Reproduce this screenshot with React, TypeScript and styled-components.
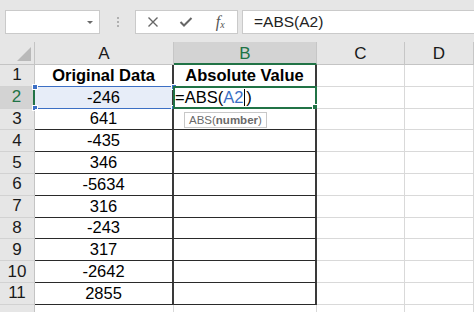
import styled, { createGlobalStyle } from 'styled-components';

const GlobalStyle = createGlobalStyle`
  html, body { margin: 0; padding: 0; }
  body {
    width: 474px;
    height: 312px;
    overflow: hidden;
    background: #fff;
    font-family: 'Liberation Sans', Arial, sans-serif;
  }
`;

const GREEN = '#217346';
const BLUE = '#3c6fc4';

const Toolbar = styled.div`
  height: 42px;
  box-sizing: border-box;
  background: #e6e6e6;
  display: flex;
  align-items: flex-start;
  padding: 10px 0 0 5px;
`;

const NameBox = styled.div`
  width: 95px;
  height: 24px;
  box-sizing: border-box;
  background: #fff;
  border: 1px solid #cacaca;
  display: flex;
  align-items: center;
  justify-content: flex-end;
  padding-right: 6px;
`;

const Caret = styled.span`
  width: 0;
  height: 0;
  border-left: 3.5px solid transparent;
  border-right: 3.5px solid transparent;
  border-top: 3.5px solid #6a6a6a;
`;

const Grip = styled.div`
  width: 35px;
  height: 24px;
  display: flex;
  flex-direction: column;
  align-items: center;
  justify-content: center;
  gap: 2px;
`;

const GripDot = styled.span`
  width: 2px;
  height: 2px;
  background: #b0b0b0;
`;

const FxBox = styled.div`
  width: 103px;
  height: 24px;
  box-sizing: border-box;
  background: #fff;
  border: 1px solid #cacaca;
  display: grid;
  grid-template-columns: 1fr 1fr 1fr;
  align-items: center;
  justify-items: center;
`;

const FxLabel = styled.span`
  font-family: 'Liberation Serif', 'Times New Roman', serif;
  font-style: italic;
  font-size: 16px;
  color: #555;
  line-height: 1;
  sub { font-size: 10px; vertical-align: -1px; }
`;

const FormulaBox = styled.div`
  flex: 1;
  margin-left: 4px;
  height: 24px;
  box-sizing: border-box;
  background: #fff;
  border: 1px solid #cacaca;
  border-right: none;
  display: flex;
  align-items: center;
  padding-left: 11px;
  font-size: 15.5px;
  color: #222;
`;

const Sheet = styled.div`
  display: grid;
  grid-template-columns: 35px 139px 143px 88px 1fr;
  grid-template-rows: 23px repeat(12, 21.8px);
`;

const Corner = styled.div`
  background: #e6e6e6;
  border-right: 1px solid #c4c4c4;
  border-bottom: 1px solid #c4c4c4;
  box-sizing: border-box;
  display: flex;
  align-items: flex-end;
  justify-content: flex-end;
  padding: 0 3px 3px 0;
`;

const ColHead = styled.div<{ $active?: boolean }>`
  box-sizing: border-box;
  background: ${p => (p.$active ? '#d3d3d3' : '#e6e6e6')};
  border-right: 1px solid #c6c6c6;
  border-bottom: ${p => (p.$active ? `2px solid ${GREEN}` : '1px solid #c4c4c4')};
  color: ${p => (p.$active ? GREEN : '#1a1a1a')};
  font-size: 17px;
  display: flex;
  align-items: center;
  justify-content: center;
  padding-top: 2px;
`;

const RowHead = styled.div<{ $active?: boolean }>`
  box-sizing: border-box;
  background: ${p => (p.$active ? '#d3d3d3' : '#e6e6e6')};
  border-right: ${p => (p.$active ? `2px solid ${GREEN}` : '1px solid #c4c4c4')};
  border-bottom: 1px solid #d2d2d2;
  color: ${p => (p.$active ? GREEN : '#1a1a1a')};
  font-size: 17px;
  display: flex;
  align-items: center;
  justify-content: center;
`;

const Cell = styled.div<{ $table?: boolean; $bold?: boolean; $left?: boolean; $fill?: string }>`
  position: relative;
  box-sizing: border-box;
  background: ${p => p.$fill || '#fff'};
  border-right: ${p => (p.$table ? '2px solid #3a3a3a' : '1px solid #d9d9d9')};
  border-bottom: ${p => (p.$table ? '1px solid #2a2a2a' : '1px solid #d9d9d9')};
  font-size: 16.5px;
  font-weight: ${p => (p.$bold ? 'bold' : 'normal')};
  color: #000;
  display: flex;
  align-items: center;
  justify-content: ${p => (p.$left ? 'flex-start' : 'center')};
  padding-left: ${p => (p.$left ? '1px' : '0')};
  white-space: nowrap;
`;

const RefFrame = styled.div`
  position: absolute;
  left: 0;
  right: -2px;
  top: -1px;
  bottom: -1px;
  border-top: 1.5px solid ${BLUE};
  border-bottom: 1.5px solid ${BLUE};
  pointer-events: none;
`;

const Handle = styled.span<{ $color: string; $x: 'l' | 'r'; $y: 't' | 'b' }>`
  position: absolute;
  width: 4px;
  height: 4px;
  background: ${p => p.$color};
  border: 1px solid #fff;
  ${p => (p.$x === 'l' ? 'left: -3px;' : 'right: -3px;')}
  ${p => (p.$y === 't' ? 'top: -3px;' : 'bottom: -3px;')}
`;

const ActiveFrame = styled.div`
  position: absolute;
  left: -1px;
  right: -2px;
  top: -1px;
  bottom: -1px;
  border: 2px solid ${GREEN};
  pointer-events: none;
`;

const RefText = styled.span`
  color: ${BLUE};
`;

const TextCursor = styled.span`
  display: inline-block;
  width: 1px;
  height: 17px;
  background: #000;
  margin: 0 1px;
`;

const Tip = styled.div`
  position: absolute;
  left: 10px;
  top: 25px;
  z-index: 3;
  background: #fff;
  border: 1px solid #c8c8c8;
  padding: 1px 4px;
  font-size: 11.5px;
  color: #6a6a6a;
  font-weight: normal;
  b { font-weight: bold; }
`;

const values = ['-246', '641', '-435', '346', '-5634', '316', '-243', '317', '-2642', '2855'];

function CloseIcon() {
  return (
    <svg width="12" height="12" viewBox="0 0 12 12">
      <path d="M1.5 1.5 L10.5 10.5 M10.5 1.5 L1.5 10.5" stroke="#666" strokeWidth="1.4" fill="none" />
    </svg>
  );
}

function CheckIcon() {
  return (
    <svg width="14" height="12" viewBox="0 0 14 12">
      <path d="M1.5 6 L5 9.5 L12.5 2" stroke="#666" strokeWidth="2" fill="none" />
    </svg>
  );
}

export default function App() {
  return (
    <>
      <GlobalStyle />
      <Toolbar>
        <NameBox>
          <Caret />
        </NameBox>
        <Grip>
          <GripDot />
          <GripDot />
          <GripDot />
        </Grip>
        <FxBox>
          <CloseIcon />
          <CheckIcon />
          <FxLabel>
            f<sub>x</sub>
          </FxLabel>
        </FxBox>
        <FormulaBox>=ABS(A2)</FormulaBox>
      </Toolbar>
      <Sheet>
        <Corner>
          <svg width="14" height="14" viewBox="0 0 14 14">
            <polygon points="14,0 14,14 0,14" fill="#b9b9b9" />
          </svg>
        </Corner>
        <ColHead>A</ColHead>
        <ColHead $active>B</ColHead>
        <ColHead>C</ColHead>
        <ColHead>D</ColHead>

        <RowHead>1</RowHead>
        <Cell $table $bold>Original Data</Cell>
        <Cell $table $bold>Absolute Value</Cell>
        <Cell />
        <Cell />

        <RowHead $active>2</RowHead>
        <Cell $table $fill="#e7edf8">
          -246
          <RefFrame>
            <Handle $color={BLUE} $x="l" $y="t" />
            <Handle $color={BLUE} $x="r" $y="t" />
            <Handle $color={BLUE} $x="l" $y="b" />
            <Handle $color={BLUE} $x="r" $y="b" />
          </RefFrame>
        </Cell>
        <Cell $table $left>
          =ABS(<RefText>A2</RefText>
          <TextCursor />)
          <ActiveFrame>
            <Handle $color={GREEN} $x="r" $y="b" />
          </ActiveFrame>
          <Tip>
            ABS(<b>number</b>)
          </Tip>
        </Cell>
        <Cell />
        <Cell />

        {values.slice(1).map((v, i) => (
          <Row key={v} n={i + 3} value={v} />
        ))}

        <RowHead />
        <Cell />
        <Cell />
        <Cell />
        <Cell />
      </Sheet>
    </>
  );
}

function Row({ n, value }: { n: number; value: string }) {
  return (
    <>
      <RowHead>{n}</RowHead>
      <Cell $table>{value}</Cell>
      <Cell $table />
      <Cell />
      <Cell />
    </>
  );
}
